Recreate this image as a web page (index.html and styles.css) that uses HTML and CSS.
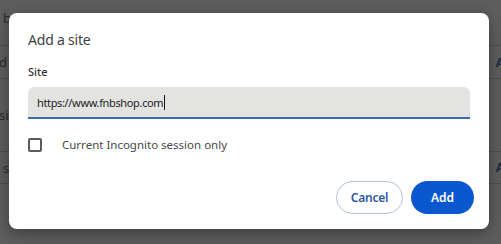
FILE: index.html
```html
<!DOCTYPE html>
<html>
<head>
<meta charset="utf-8">
<link rel="stylesheet" href="styles.css">
</head>
<body>
<div class="page">
  <div class="row r1"><span class="bg-text t1">b</span></div>
  <div class="row r2"><span class="bg-text t2">d</span><span class="bg-a">A</span></div>
  <div class="row r3"><span class="bg-text t3">sit</span></div>
  <div class="row r4"><span class="bg-text t4">s</span><span class="bg-a">A</span></div>
</div>
<div class="dialog" role="dialog">
  <h1 class="title">Add a site</h1>
  <label class="label">Site</label>
  <div class="input"><span class="value">https://www.fnbshop.com</span><span class="caret"></span></div>
  <div class="check-row">
    <span class="checkbox"></span>
    <span class="check-label">Current Incognito session only</span>
  </div>
  <div class="actions">
    <button class="btn cancel">Cancel</button>
    <button class="btn add">Add</button>
  </div>
</div>
</body>
</html>
```
FILE: styles.css
```css
html, body {
  margin: 0;
  padding: 0;
}
body {
  width: 501px;
  height: 244px;
  overflow: hidden;
  background: #5d5d5d;
  font-family: "Noto Sans", "Open Sans", sans-serif;
  position: relative;
}
.page {
  display: flex;
  flex-direction: column;
}
.row {
  display: flex;
  align-items: center;
  justify-content: space-between;
  box-sizing: border-box;
  border-bottom: 1px solid #4a4d52;
}
.r1 { height: 46px; align-items: flex-start; }
.r2 { height: 33px; }
.r3 { height: 73px; }
.r4 { height: 32px; }
.bg-text {
  color: #2a2a2a;
  font-size: 13px;
}
.t1 { margin: 9px 0 0 3px; }
.t2 { margin-left: -1px; }
.t3 { margin-left: -1px; }
.t4 { margin-left: 3px; }
.bg-a {
  color: #1d2b45;
  font-size: 12px;
  font-weight: 700;
  margin-right: -3px;
}
.dialog {
  position: absolute;
  left: 9px;
  top: 13px;
  width: 480px;
  height: 216px;
  box-sizing: border-box;
  background: #ffffff;
  border-radius: 8px;
  box-shadow: 0 4px 14px rgba(0, 0, 0, 0.35);
  padding: 17px 19px 15px;
  display: flex;
  flex-direction: column;
}
.title {
  margin: 0;
  font-size: 14px;
  letter-spacing: -0.2px;
  font-weight: 400;
  line-height: 20px;
  color: #3f3f3f;
}
.label {
  margin-top: 14px;
  font-size: 11px;
  font-weight: 500;
  line-height: 16px;
  color: #333333;
}
.input {
  margin-top: 7px;
  height: 32px;
  box-sizing: border-box;
  background: #e3e3e2;
  border-radius: 6px 6px 0 0;
  border-bottom: 2px solid #3b6aa6;
  padding: 0 9px;
  display: flex;
  align-items: center;
}
.value {
  font-size: 11px;
  letter-spacing: -0.35px;
  color: #222222;
}
.caret {
  display: inline-block;
  width: 1px;
  height: 15px;
  background: #1a1a1a;
  margin-left: 1px;
}
.check-row {
  margin-top: 18px;
  display: flex;
  align-items: center;
}
.checkbox {
  width: 14px;
  height: 14px;
  box-sizing: border-box;
  border: 2px solid #5a5a5a;
  border-radius: 2px;
}
.check-label {
  margin-left: 20px;
  font-size: 11.5px;
  color: #474747;
}
.actions {
  margin-top: auto;
  margin-right: -4px;
  display: flex;
  justify-content: flex-end;
  gap: 8px;
}
.btn {
  height: 33px;
  border-radius: 17px;
  font-family: "Noto Sans", "Open Sans", sans-serif;
  font-size: 12px;
  font-weight: 600;
  box-sizing: border-box;
  cursor: pointer;
  padding: 0;
}
.cancel {
  width: 67px;
  background: #ffffff;
  border: 1px solid #b4c0d6;
  color: #2c55a8;
  letter-spacing: -0.2px;
}
.add {
  width: 63px;
  background: #0b57d0;
  border: none;
  color: #ffffff;
}
```
